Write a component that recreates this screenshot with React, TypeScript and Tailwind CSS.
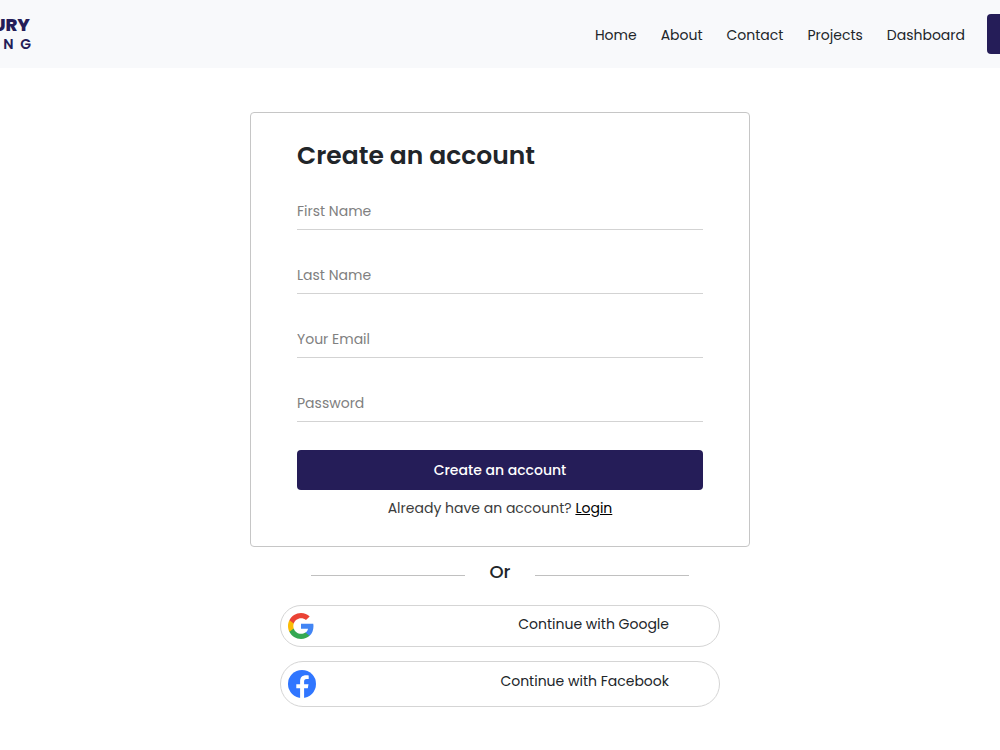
import React from "react";

const navLinks = ["Home", "About", "Contact", "Projects", "Dashboard"];

const fields = [
  { id: "firstName", label: "First Name", type: "text" },
  { id: "lastName", label: "Last Name", type: "text" },
  { id: "email", label: "Your Email", type: "email" },
  { id: "password", label: "Password", type: "password" },
];

const GoogleIcon = () => (
  <svg viewBox="2 2 44 44" className="w-[26px] h-[26px]" aria-hidden="true">
    <path
      fill="#4285F4"
      d="M45.12 24.5c0-1.56-.14-3.06-.4-4.5H24v8.51h11.84c-.51 2.75-2.06 5.08-4.39 6.64v5.52h7.11c4.16-3.83 6.56-9.47 6.56-16.17z"
    />
    <path
      fill="#34A853"
      d="M24 46c5.94 0 10.92-1.97 14.56-5.33l-7.11-5.52c-1.97 1.32-4.49 2.1-7.45 2.1-5.73 0-10.58-3.87-12.31-9.07H4.34v5.7C7.96 41.07 15.4 46 24 46z"
    />
    <path
      fill="#FBBC05"
      d="M11.69 28.18C11.25 26.86 11 25.45 11 24s.25-2.86.69-4.18v-5.7H4.34C2.85 17.09 2 20.45 2 24s.85 6.91 2.34 9.88l7.35-5.7z"
    />
    <path
      fill="#EA4335"
      d="M24 10.75c3.23 0 6.13 1.11 8.41 3.29l6.31-6.31C34.91 4.18 29.93 2 24 2 15.4 2 7.96 6.93 4.34 14.12l7.35 5.7c1.73-5.2 6.58-9.07 12.31-9.07z"
    />
  </svg>
);

const FacebookIcon = () => (
  <svg viewBox="0 0 28 28" className="w-7 h-7" aria-hidden="true">
    <circle cx="14" cy="14" r="14" fill="#3076FF" />
    <path
      fill="#fff"
      d="M12.1 28V18.3H8.300v-4h3.800v-3c0-4.100 2.300-6.100 6-6.100 1 0 1.900.1 2.600.2v3.700h-2.100c-2 0-2.500.9-2.500 2.500v2.700h4.400l-.7 4h-3.700V28z"
    />
  </svg>
);

const Header = () => (
  <header className="flex items-center justify-between h-[68px] bg-[#f8f9fb] overflow-hidden">
    <a
      href="#home"
      className="flex flex-col items-end w-8 pr-px text-[#251d58] whitespace-pre"
    >
      <span className="text-lg leading-5 font-extrabold pr-px">URY</span>
      <span className="text-sm leading-[18px] font-semibold">{"N  G"}</span>
    </a>
    <div className="flex items-center gap-[22px]">
      <nav className="flex gap-6 pt-0.5">
        {navLinks.map((link) => (
          <a key={link} href={`#${link.toLowerCase()}`}>
            {link}
          </a>
        ))}
      </nav>
      <button type="button" aria-label="Login" className="w-[13px] h-10 rounded-l-sm bg-[#251d58]" />
    </div>
  </header>
);

export default function App() {
  return (
    <div className="min-h-screen bg-white font-[Poppins,Inter,sans-serif] text-sm leading-6 text-[#212529]">
      <Header />
      <main className="flex flex-col items-center pt-11 pb-10">
        <form
          className="w-1/2 px-[46px] pt-[23px] pb-[26px] border border-[#c6c6c6] rounded-sm"
          onSubmit={(e) => e.preventDefault()}
        >
          <h1 className="text-[25px] leading-10 font-semibold">Create an account</h1>
          <div className="flex flex-col gap-[26px] mt-4">
            {fields.map((f) => (
              <input
                key={f.id}
                id={f.id}
                type={f.type}
                placeholder={f.label}
                aria-label={f.label}
                className="w-full h-[38px] pt-0.5 border-b border-[#d3d3d3] outline-none placeholder:text-[#808080]"
              />
            ))}
          </div>
          <button
            type="submit"
            className="w-full h-10 mt-7 rounded-sm bg-[#251d58] text-white font-medium"
          >
            Create an account
          </button>
          <p className="mt-1.5 text-center text-[#3c3c3c]">
            Already have an account?{" "}
            <a href="#login" className="text-black underline">
              Login
            </a>
          </p>
        </form>

        <div className="flex items-center justify-center gap-6 w-1/2 mt-[13px]">
          <span className="w-[154px] mt-1.5 border-t border-[#c0c0c0]" />
          <span className="text-lg leading-6 font-medium">Or</span>
          <span className="w-[154px] mt-1.5 border-t border-[#c0c0c0]" />
        </div>

        <div className="flex flex-col gap-3.5 w-[44%] mt-[21px]">
          <button
            type="button"
            className="flex justify-between pl-[7px] pr-[50px] py-[7px] leading-[22px] border border-[#d5d5d5] rounded-full"
          >
            <GoogleIcon />
            <span>Continue with Google</span>
          </button>
          <button
            type="button"
            className="flex justify-between pl-[7px] pr-[50px] py-2 leading-[22px] border border-[#d5d5d5] rounded-full"
          >
            <FacebookIcon />
            <span>Continue with Facebook</span>
          </button>
        </div>
      </main>
    </div>
  );
}
